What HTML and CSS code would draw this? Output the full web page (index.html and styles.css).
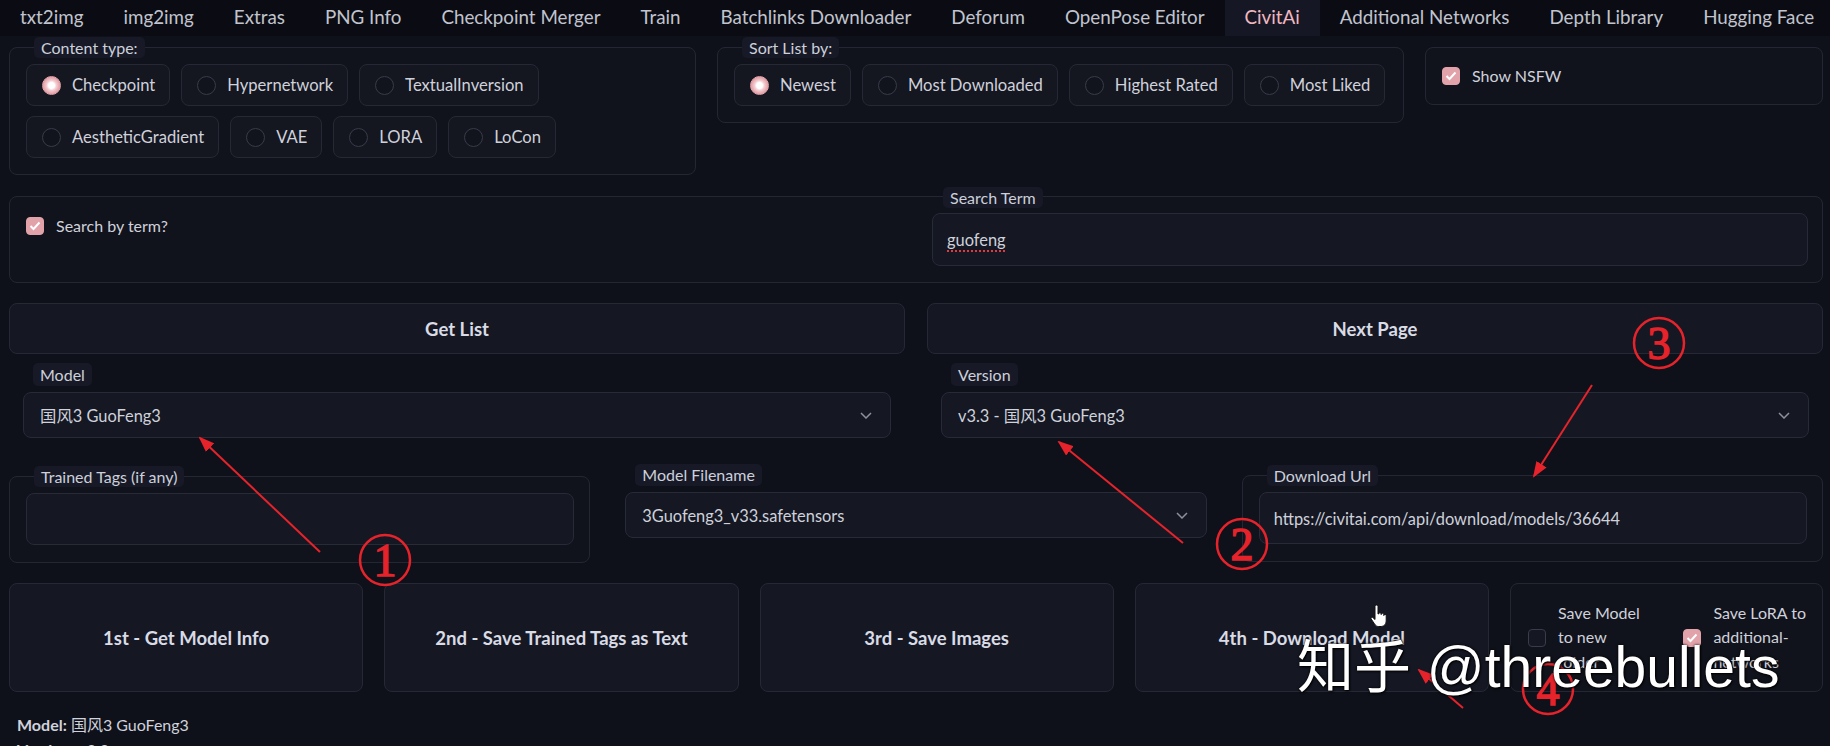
FILE: index.html
```html
<!DOCTYPE html>
<html>
<head>
  <title>CivitAi Helper</title>
  <link rel="stylesheet" href="styles.css">
</head>
<body>
  <div class="tabs">
    <div class="tab">txt2img</div>
    <div class="tab">img2img</div>
    <div class="tab">Extras</div>
    <div class="tab">PNG Info</div>
    <div class="tab">Checkpoint Merger</div>
    <div class="tab">Train</div>
    <div class="tab">Batchlinks Downloader</div>
    <div class="tab">Deforum</div>
    <div class="tab">OpenPose Editor</div>
    <div class="tab active">CivitAi</div>
    <div class="tab">Additional Networks</div>
    <div class="tab">Depth Library</div>
    <div class="tab">Hugging Face</div>
  </div>

  <div class="page">
    <div class="top-row">
      <div class="block">
        <span class="label">Content type:</span>
        <div class="choices">
          <div class="choice"><span class="dot on"></span>Checkpoint</div>
          <div class="choice"><span class="dot"></span>Hypernetwork</div>
          <div class="choice"><span class="dot"></span>TextualInversion</div>
          <div class="choice"><span class="dot"></span>AestheticGradient</div>
          <div class="choice"><span class="dot"></span>VAE</div>
          <div class="choice"><span class="dot"></span>LORA</div>
          <div class="choice"><span class="dot"></span>LoCon</div>
        </div>
      </div>
      <div class="block">
        <span class="label">Sort List by:</span>
        <div class="choices">
          <div class="choice"><span class="dot on"></span>Newest</div>
          <div class="choice"><span class="dot"></span>Most Downloaded</div>
          <div class="choice"><span class="dot"></span>Highest Rated</div>
          <div class="choice"><span class="dot"></span>Most Liked</div>
        </div>
      </div>
      <div class="block nsfw">
        <div class="check">
          <span class="box on"><svg width="12" height="10" viewBox="0 0 12 10"><polyline points="1.5,5 4.5,8 10.5,1.5" fill="none" stroke="#fff" stroke-width="2"/></svg></span>
          Show NSFW
        </div>
      </div>
    </div>

    <div class="block search">
      <div class="check tall">
        <span class="box on"><svg width="12" height="10" viewBox="0 0 12 10"><polyline points="1.5,5 4.5,8 10.5,1.5" fill="none" stroke="#fff" stroke-width="2"/></svg></span>
        Search by term?
      </div>
      <div class="field">
        <span class="label">Search Term</span>
        <div class="input"><span class="typo">guofeng</span></div>
      </div>
    </div>

    <div class="pair buttons">
      <div class="btn">Get List</div>
      <div class="btn">Next Page</div>
    </div>

    <div class="pair selects">
      <div class="pick">
        <span class="tag">Model</span>
        <div class="select">国风3 GuoFeng3<svg width="12" height="7" viewBox="0 0 12 7"><polyline points="1,1 6,6 11,1" fill="none" stroke="#8d909c" stroke-width="1.5"/></svg></div>
      </div>
      <div class="pick">
        <span class="tag">Version</span>
        <div class="select">v3.3 - 国风3 GuoFeng3<svg width="12" height="7" viewBox="0 0 12 7"><polyline points="1,1 6,6 11,1" fill="none" stroke="#8d909c" stroke-width="1.5"/></svg></div>
      </div>
    </div>

    <div class="trio">
      <div class="block boxed">
        <span class="label">Trained Tags (if any)</span>
        <div class="input short"></div>
      </div>
      <div class="pick flat">
        <span class="tag">Model Filename</span>
        <div class="select">3Guofeng3_v33.safetensors<svg width="12" height="7" viewBox="0 0 12 7"><polyline points="1,1 6,6 11,1" fill="none" stroke="#8d909c" stroke-width="1.5"/></svg></div>
      </div>
      <div class="block boxed url">
        <span class="label">Download Url</span>
        <div class="input short">https://civitai.com/api/download/models/36644</div>
      </div>
    </div>

    <div class="actions">
      <div class="btn">1st - Get Model Info</div>
      <div class="btn">2nd - Save Trained Tags as Text</div>
      <div class="btn">3rd - Save Images</div>
      <div class="btn">4th - Download Model</div>
      <div class="opts">
        <div class="opt">
          <span class="box"></span>
          <span>Save Model<br>to new<br>folder</span>
        </div>
        <div class="opt">
          <span class="box on"><svg width="12" height="10" viewBox="0 0 12 10"><polyline points="1.5,5 4.5,8 10.5,1.5" fill="none" stroke="#fff" stroke-width="2"/></svg></span>
          <span>Save LoRA to<br>additional-<br>networks</span>
        </div>
      </div>
    </div>

    <div class="info">
      <p><b>Model:</b> 国风3 GuoFeng3</p>
      <p><b>Version:</b> v3.3</p>
    </div>
  </div>

  <!-- red annotations drawn over the screenshot -->
  <svg class="marks" width="1830" height="746" viewBox="0 0 1830 746">
    <defs>
      <marker id="head" markerWidth="8" markerHeight="6" refX="7" refY="3" orient="auto" markerUnits="strokeWidth">
        <path d="M0,0 L8,3 L0,6 Z" fill="#e6232b"/>
      </marker>
    </defs>
    <g stroke="#e6232b" stroke-width="2" marker-end="url(#head)">
      <line x1="320" y1="552" x2="200" y2="438"/>
      <line x1="1183" y1="543" x2="1059" y2="442"/>
      <line x1="1592" y1="385" x2="1534" y2="476"/>
      <line x1="1463" y1="708" x2="1419" y2="670"/>
    </g>
    <g fill="none" stroke="#e6232b" stroke-width="2.5">
      <circle cx="385" cy="560" r="25"/>
      <circle cx="1242" cy="544" r="25"/>
      <circle cx="1659" cy="343" r="25"/>
      <circle cx="1548" cy="689" r="25"/>
    </g>
    <g class="num" fill="#e6232b" stroke="#e6232b" stroke-width="1.4" text-anchor="middle">
      <text x="385" y="576">1</text>
      <text x="1242" y="560">2</text>
      <text x="1659" y="359">3</text>
      <text x="1548" y="705">4</text>
    </g>
  </svg>

  <svg class="cursor" width="18" height="24" viewBox="0 0 18 24">
    <path d="M6 2.5a1.5 1.5 0 0 1 3 0V10h.6a1.3 1.3 0 0 1 2.6 0v.6a1.3 1.3 0 0 1 2.6 0v1a1.2 1.2 0 0 1 2.4 0V17c0 3.2-2 5.5-5 5.5H9.5c-2 0-3-1-4-2.6L2.2 15c-.8-1.1.6-2.4 1.6-1.5L6 15.5Z" fill="#fff" stroke="#111" stroke-width="1"/>
  </svg>

  <div class="watermark">知乎 @threebullets</div>
</body>
</html>
```

FILE: styles.css
```css
/* dark gradio-like theme for the CivitAi tab */
body {
  margin: 0;
  width: 1830px;
  height: 746px;
  overflow: hidden;
  position: relative;
  background: #0f111a;
  color: #cfd1db;
  font-family: Lato, "Noto Sans CJK SC", sans-serif;
}
p {
  margin: 0;
}
.tabs {
  display: flex;
  height: 36px;
  background: #0b0c13;
  font-size: 18.8px;
  color: #c1c4ce;
}
.tab {
  flex: none;
  white-space: nowrap;
  padding: 0 20px;
  line-height: 34px;
}
.tab.active {
  background: #151824;
  color: #f1b7c1;
}
.page {
  padding: 0 7px 0 9px;
}
.top-row {
  display: grid;
  grid-template-columns: 687px 687px 1fr;
  gap: 21px;
  align-items: start;
  margin-top: 11px;
}
.block {
  position: relative;
  box-sizing: border-box;
  border: 1px solid #242733;
  border-radius: 8px;
  background: #11131c;
  padding: 16px;
}
.label {
  position: absolute;
  top: -11px;
  left: 24px;
  height: 21px;
  line-height: 21px;
  padding: 0 7px;
  border-radius: 5px;
  background: #171a26;
  font-size: 16px;
  color: #cdd0db;
  white-space: nowrap;
}
.choices {
  display: flex;
  flex-wrap: wrap;
  gap: 10px 11px;
}
.choice {
  display: flex;
  align-items: center;
  gap: 11px;
  height: 42px;
  box-sizing: border-box;
  padding: 0 14px 0 15px;
  border: 1px solid #262935;
  border-radius: 8px;
  background: #141620;
  font-size: 16.6px;
  white-space: nowrap;
}
.dot {
  width: 19px;
  height: 19px;
  box-sizing: border-box;
  border-radius: 50%;
  border: 1px solid #393c49;
  background: #12141d;
}
.dot.on {
  border-color: #e6a3aa;
  background: radial-gradient(circle, #fff 0, #fff 3px, #f2cdd1 5px, #e6a3aa 8px);
}
.nsfw {
  padding: 18px 16px;
}
.check {
  display: flex;
  align-items: center;
  gap: 12px;
  font-size: 16px;
  line-height: 20px;
}
.check.tall {
  height: 26px;
}
.box {
  display: flex;
  align-items: center;
  justify-content: center;
  flex: none;
  width: 18px;
  height: 18px;
  box-sizing: border-box;
  border-radius: 4px;
  border: 1px solid #393c49;
  background: #151822;
}
.box.on {
  border-color: #e2a2a9;
  background: #e2a2a9;
}
.search {
  display: grid;
  grid-template-columns: 1fr 1fr;
  gap: 30px;
  margin-top: 21px;
  padding: 16px 14px 16px 16px;
}
.field {
  position: relative;
}
.field .label {
  top: -26px;
  left: 11px;
}
.input {
  display: flex;
  align-items: center;
  height: 53px;
  box-sizing: border-box;
  padding: 0 14px;
  border: 1px solid #272a37;
  border-radius: 8px;
  background: #151823;
  font-size: 16.4px;
}
.input.short {
  height: 52px;
}
.typo {
  text-decoration: underline dotted #e0393f;
  text-decoration-thickness: 2px;
  text-underline-offset: 4px;
}
.pair {
  display: grid;
  grid-template-columns: 1fr 1fr;
  gap: 22px;
}
.btn {
  display: flex;
  align-items: center;
  justify-content: center;
  box-sizing: border-box;
  border: 1px solid #262935;
  border-radius: 8px;
  background: #151823;
  font-size: 18.5px;
  font-weight: 700;
  color: #d9dbe5;
}
.buttons {
  margin-top: 20px;
  height: 51px;
}
.selects {
  margin-top: 9px;
}
.pick {
  display: flex;
  flex-direction: column;
  align-items: flex-start;
  padding: 0 14px;
}
.pick.flat {
  padding: 0;
}
.tag {
  margin-left: 10px;
  height: 23px;
  line-height: 23px;
  padding: 0 7px;
  border-radius: 5px;
  background: #171a26;
  font-size: 16px;
  color: #cdd0db;
}
.flat .tag {
  height: 22px;
  line-height: 22px;
}
.select {
  align-self: stretch;
  display: flex;
  align-items: center;
  justify-content: space-between;
  margin-top: 6px;
  height: 46px;
  box-sizing: border-box;
  padding: 0 18px 0 16px;
  border: 1px solid #272a37;
  border-radius: 8px;
  background: #151823;
  font-size: 16.4px;
}
.trio {
  display: grid;
  grid-template-columns: repeat(3, 1fr);
  gap: 35px;
  align-items: start;
  margin-top: 26px;
}
.boxed {
  margin-top: 12px;
  padding: 16px 15px 17px 16px;
}
.boxed .label {
  top: -11px;
  left: 24px;
}
.boxed.url {
  margin-top: 11px;
}
.actions {
  display: grid;
  grid-template-columns: repeat(4, 1fr) 313px;
  gap: 21px;
  height: 109px;
  margin-top: 20px;
}
.opts {
  display: grid;
  grid-template-columns: 1fr 1fr;
  gap: 34px;
  align-items: center;
  box-sizing: border-box;
  padding: 0 16px 0 17px;
  border: 1px solid #242733;
  border-radius: 8px;
  background: #11131c;
}
.opt {
  display: flex;
  align-items: center;
  gap: 12px;
  font-size: 16px;
  line-height: 24.5px;
  white-space: nowrap;
}
.info {
  margin-top: 20px;
  padding-left: 8px;
  font-size: 16px;
  line-height: 25px;
  color: #d0d2dc;
}
.marks {
  position: absolute;
  top: 0;
  left: 0;
  pointer-events: none;
}
.num {
  font-family: "Liberation Serif", serif;
  font-size: 46px;
}
.cursor {
  position: absolute;
  left: 1369px;
  top: 604px;
}
.watermark {
  position: absolute;
  left: 1297px;
  top: 639px;
  font-family: "Liberation Sans", "Noto Sans CJK SC", sans-serif;
  font-size: 57px;
  line-height: 57px;
  color: #fff;
  white-space: nowrap;
  text-shadow: 0 0 3px #000, 1px 1px 2px #000;
}
```
